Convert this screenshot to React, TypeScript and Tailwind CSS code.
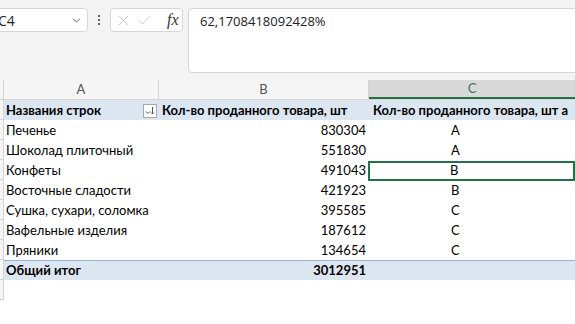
import { ChevronDown, X, Check } from "lucide-react";

const rows = [
  { name: "Печенье", qty: "830304", cls: "A" },
  { name: "Шоколад плиточный", qty: "551830", cls: "A" },
  { name: "Конфеты", qty: "491043", cls: "B", active: true },
  { name: "Восточные сладости", qty: "421923", cls: "B" },
  { name: "Сушка, сухари, соломка", qty: "395585", cls: "C" },
  { name: "Вафельные изделия", qty: "187612", cls: "C" },
  { name: "Пряники", qty: "134654", cls: "C" },
];

const cellFont = { fontFamily: "Lato, 'Liberation Sans', sans-serif" };

export default function App() {
  return (
    <div className="w-[575px] h-[324px] overflow-hidden bg-white text-[#000]" style={cellFont}>
      {/* formula bar */}
      <div className="h-[80px] bg-[#f3f3f3] flex items-start pt-[8px] gap-[5px]">
        <div className="ml-[-38px] w-[126px] h-[24px] bg-white border border-[#d6d6d6] rounded-[4px] flex items-center pl-[35px] pr-[4px] text-[14px] text-[#222]" style={{ fontFamily: "'Open Sans', sans-serif" }}>
          <span className="flex-1">C4</span>
          <ChevronDown size={13} strokeWidth={1.5} className="text-[#444]" />
        </div>
        <div className="w-[12px] h-[24px] flex flex-col items-center justify-center gap-[2px]">
          <span className="w-[2px] h-[2px] bg-[#333] rounded-full" />
          <span className="w-[2px] h-[2px] bg-[#333] rounded-full" />
          <span className="w-[2px] h-[2px] bg-[#333] rounded-full" />
        </div>
        <div className="w-[73px] h-[24px] bg-white border border-[#d6d6d6] rounded-[4px] flex items-center pl-[4px] gap-[4px]">
          <X size={17} strokeWidth={1} className="text-[#b5b5b5]" />
          <Check size={17} strokeWidth={1} className="text-[#b5b5b5]" />
          <span className="ml-[10px] text-[16px] italic text-[#333]" style={{ fontFamily: "'Liberation Serif', serif" }}>
            fx
          </span>
        </div>
        <div className="flex-1 mr-[-20px] h-[65px] bg-white border border-[#d6d6d6] rounded-[4px] pl-[11px] pt-[3px] text-[13px] text-[#222]" style={{ fontFamily: "'Open Sans', sans-serif" }}>
          62,1708418092428%
        </div>
      </div>

      {/* column headers */}
      <div className="flex h-[20px] bg-[#f5f5f5] border-b border-[#d4d4d4] text-[13px] text-[#555]">
        <div className="w-[4px] border-r border-[#d4d4d4]" />
        <div className="w-[155px] border-r border-[#d4d4d4] flex items-center justify-center">A</div>
        <div className="w-[210px] border-r border-[#d4d4d4] flex items-center justify-center">B</div>
        <div className="flex-1 bg-[#d8d8d8] border-b-2 border-[#217346] flex items-center justify-center text-[#3d7555]">C</div>
      </div>

      {/* grid */}
      <div className="flex">
        <div className="w-[4px] bg-[#f5f5f5] border-r border-[#d4d4d4] flex flex-col">
          {Array.from({ length: 10 }).map((_, i) => (
            <div key={i} className="h-[20px] border-b border-[#d4d4d4]" />
          ))}
        </div>
        <div className="flex-1 text-[13px]">
          <div className="flex h-[20px] bg-[#dce6f1] font-bold items-center pt-[1px]">
            <div className="w-[155px] pl-[2px] flex items-center justify-between pr-[2px]">
              <span>Названия строк</span>
              <span className="w-[14px] h-[14px] bg-white border border-[#a8a8a8] flex items-center justify-center">
                <svg width="10" height="10" viewBox="0 0 10 10">
                  <path d="M1 5.5 L3 7.5 L5 5.5" stroke="#555" fill="none" strokeWidth="1" />
                  <path d="M7.5 1 V8 M6 6.5 L7.5 8 L9 6.5" stroke="#555" fill="none" strokeWidth="1" />
                </svg>
              </span>
            </div>
            <div className="w-[210px] pl-[3px] whitespace-nowrap">Кол-во проданного товара, шт</div>
            <div className="flex-1 pl-[4px] whitespace-nowrap overflow-hidden">Кол-во проданного товара, шт а</div>
          </div>
          {rows.map((r) => (
            <div key={r.name} className="flex h-[20px] items-center pt-[1px]">
              <div className="w-[155px] pl-[2px] whitespace-nowrap">{r.name}</div>
              <div className="w-[210px] text-right pr-[3px]">{r.qty}</div>
              <div
                className={
                  r.active
                    ? "flex-1 h-[20px] ml-[-1px] border-2 border-[#217346] flex items-center pl-[80px]"
                    : "flex-1 pl-[82px]"
                }
              >
                {r.cls}
              </div>
            </div>
          ))}
          <div className="flex h-[20px] bg-[#dce6f1] border-t border-[#95b3d7] font-bold items-center pt-[1px]">
            <div className="w-[155px] pl-[2px]">Общий итог</div>
            <div className="w-[210px] text-right pr-[3px]">3012951</div>
            <div className="flex-1" />
          </div>
        </div>
      </div>
    </div>
  );
}
